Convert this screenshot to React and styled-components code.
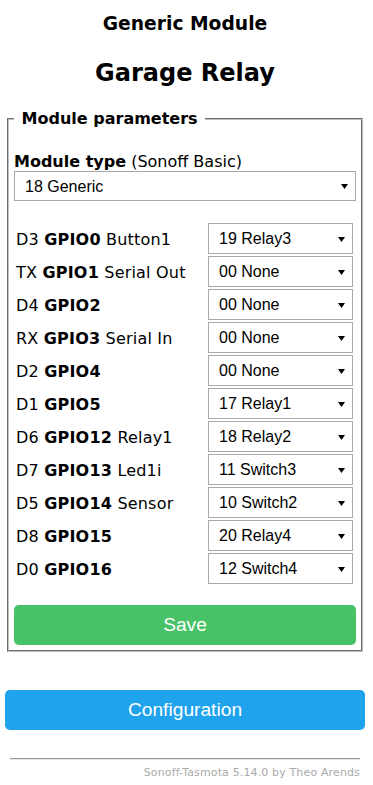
import React from "react";
import styled, { createGlobalStyle } from "styled-components";

const Global = createGlobalStyle`
  html, body { margin: 0; padding: 0; background: #fff; }
  body { font-family: "DejaVu Sans", Verdana, sans-serif; color: #000; font-size: 16px; }
`;

const Page = styled.div`
  width: 360px;
  padding: 0 5px;
  text-align: left;
`;

const Header = styled.div`
  text-align: center;
  padding-top: 13px;
`;

const SubTitle = styled.h3`
  margin: 0;
  font-size: 18.72px;
  line-height: 22px;
  font-weight: bold;
`;

const Title = styled.h2`
  margin: 24px 0 0;
  font-size: 24px;
  line-height: 28px;
  font-weight: bold;
`;

const Fieldset = styled.fieldset`
  margin: 22px 2px 0;
  padding: 5px;
  border: 2px groove rgb(192, 192, 192);
  min-width: 0;
`;

const Legend = styled.legend`
  padding: 0 2px;
  font-weight: bold;
  font-size: 16px;
  line-height: normal;
  white-space: pre;
`;

const FieldLabel = styled.div`
  margin-top: 19px;
  line-height: 19px;
`;

const SelectWrap = styled.div`
  position: relative;
  width: ${(p) => p.$width || "100%"};
`;

const Select = styled.select`
  appearance: none;
  -webkit-appearance: none;
  display: block;
  width: 100%;
  height: ${(p) => p.$height || 31}px;
  margin: 0;
  padding: 0 20px 0 10px;
  border: 1px solid #a9a9a9;
  border-radius: 0;
  background: #fff;
  color: #000;
  font-family: "Liberation Sans", Arial, sans-serif;
  font-size: 16px;
  outline: none;
`;

const Arrow = styled.svg`
  position: absolute;
  right: 8px;
  top: 50%;
  margin-top: -2px;
  width: 7px;
  height: 5px;
  pointer-events: none;
`;

const PinGrid = styled.div`
  display: grid;
  grid-template-columns: 190px 145px;
  column-gap: 2px;
  row-gap: 2px;
  padding: 2px;
  margin-top: 20px;
  align-items: center;
`;

const PinLabel = styled.div`
  line-height: 19px;
  padding-top: 2px;
  white-space: nowrap;
  letter-spacing: 0.2px;
`;

const Button = styled.button`
  display: block;
  width: 100%;
  height: 40px;
  border: 0;
  border-radius: 0.3rem;
  background-color: ${(p) => p.$bg};
  color: #fff;
  font-family: "Liberation Sans", Arial, sans-serif;
  font-size: 19.2px;
  line-height: 38px;
  padding: 0;
  margin-top: ${(p) => p.$mt}px;
  cursor: pointer;
`;

const Footer = styled.div`
  margin-top: 28px;
  text-align: right;
  font-size: 11px;
`;

const Rule = styled.hr`
  margin: 0 5px 6px;
  height: 0;
  border: 0;
  border-top: 1px solid #9a9a9a;
  border-bottom: 1px solid #e6e6e6;
`;

const FooterLink = styled.a`
  display: block;
  padding-right: 5px;
  color: #aaa;
  text-decoration: none;
  line-height: 13px;
  letter-spacing: 0.14px;
`;

function Dropdown({ value, width, height }) {
  return (
    <SelectWrap $width={width}>
      <Select $height={height} defaultValue={value}>
        <option value={value}>{value}</option>
      </Select>
      <Arrow viewBox="0 0 7 5">
        <path d="M0 0 H7 L3.5 5 Z" fill="#000" />
      </Arrow>
    </SelectWrap>
  );
}

const pins = [
  ["D3", "GPIO0", "Button1", "19 Relay3"],
  ["TX", "GPIO1", "Serial Out", "00 None"],
  ["D4", "GPIO2", "", "00 None"],
  ["RX", "GPIO3", "Serial In", "00 None"],
  ["D2", "GPIO4", "", "00 None"],
  ["D1", "GPIO5", "", "17 Relay1"],
  ["D6", "GPIO12", "Relay1", "18 Relay2"],
  ["D7", "GPIO13", "Led1i", "11 Switch3"],
  ["D5", "GPIO14", "Sensor", "10 Switch2"],
  ["D8", "GPIO15", "", "20 Relay4"],
  ["D0", "GPIO16", "", "12 Switch4"],
];

export default function App() {
  return (
    <>
      <Global />
      <Page>
        <Header>
          <SubTitle>Generic Module</SubTitle>
          <Title>Garage Relay</Title>
        </Header>
        <Fieldset>
          <Legend>{"\u00a0Module parameters\u00a0"}</Legend>
          <FieldLabel>
            <b>Module type</b> (Sonoff Basic)
          </FieldLabel>
          <Dropdown value="18 Generic" height={30} />
          <PinGrid>
            {pins.map(([d, g, f, v]) => (
              <React.Fragment key={g}>
                <PinLabel>
                  {d} <b>{g}</b>
                  {f ? " " + f : ""}
                </PinLabel>
                <Dropdown value={v} />
              </React.Fragment>
            ))}
          </PinGrid>
          <Button $bg="#47c266" $mt={19}>Save</Button>
        </Fieldset>
        <Button $bg="#1fa3ec" $mt={38}>Configuration</Button>
        <Footer>
          <Rule />
          <FooterLink href="#">Sonoff-Tasmota 5.14.0 by Theo Arends</FooterLink>
        </Footer>
      </Page>
    </>
  );
}
